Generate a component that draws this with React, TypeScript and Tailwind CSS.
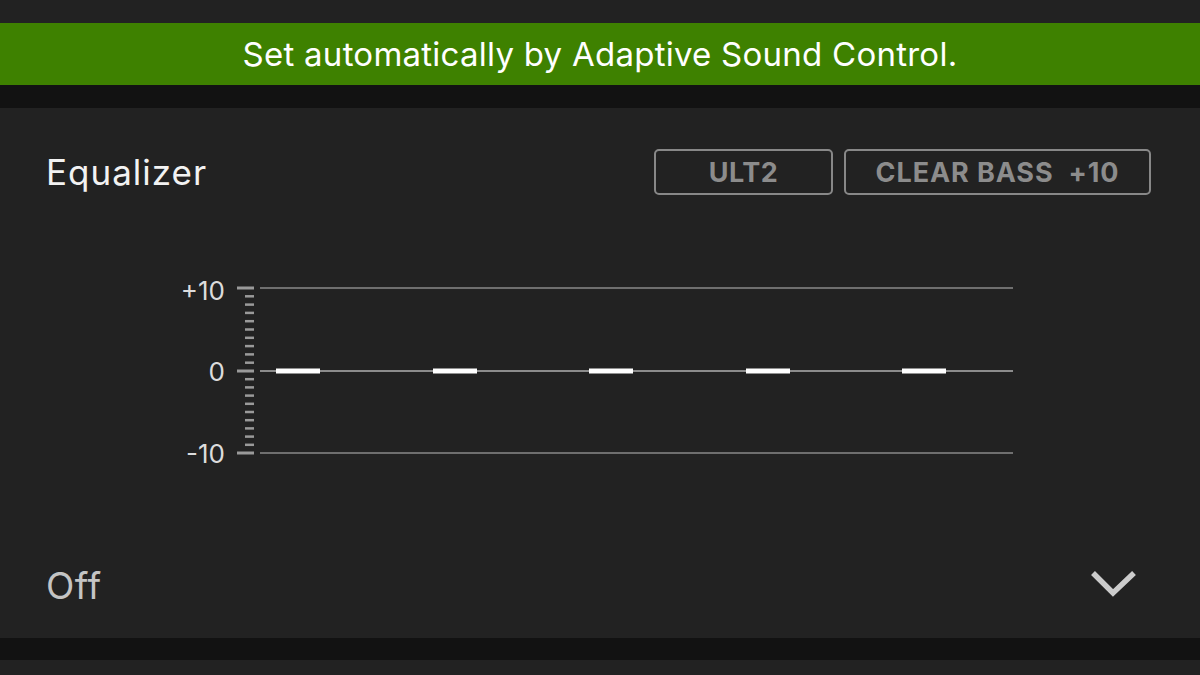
import React from "react";

const font = { fontFamily: "Inter, 'Noto Sans', sans-serif" };

function Chart() {
  const top = 28; // y of +10 line within svg (svg top at 260)
  const zero = 111;
  const bottom = 193;
  const minor: number[] = [];
  for (let i = 1; i < 10; i++) minor.push(top + ((zero - top) * i) / 10);
  for (let i = 1; i < 10; i++) minor.push(zero + ((bottom - zero) * i) / 10);
  const bars = [276, 433, 589, 746, 902];
  const ox = 160;
  return (
    <svg width="860" height="220" viewBox="0 0 860 220" className="block">
      <g style={font} fontSize="26" fill="#dcdcdc" textAnchor="end">
        <text x={225 - ox} y={top + 12}>+10</text>
        <text x={225 - ox} y={zero + 10}>0</text>
        <text x={225 - ox} y={bottom + 10}>-10</text>
      </g>
      {[top, zero, bottom].map((y) => (
        <rect key={y} x={237 - ox} y={y - 1.5} width={17} height={3} fill="#9a9a9a" />
      ))}
      {minor.map((y, i) => (
        <rect key={i} x={245 - ox} y={y - 1.25} width={9} height={2.5} fill="#9a9a9a" />
      ))}
      <rect x={260 - ox} y={top - 1} width={753} height={2} fill="#6f6f6f" />
      <rect x={260 - ox} y={zero - 1} width={753} height={2} fill="#8c8c8c" />
      <rect x={260 - ox} y={bottom - 1} width={753} height={2} fill="#6f6f6f" />
      {bars.map((x) => (
        <rect key={x} x={x - ox} y={zero - 2.5} width={44} height={5} fill="#ffffff" />
      ))}
    </svg>
  );
}

export default function App() {
  return (
    <div className="w-[1200px] h-[675px] flex flex-col bg-[#222222] overflow-hidden" style={font}>
      <div className="h-[23px] bg-[#222222]" />
      <div className="h-[62px] bg-[#3e8100] flex items-center justify-center">
        <span className="text-white text-[33px] tracking-[0.25px] leading-none">Set automatically by Adaptive Sound Control.</span>
      </div>
      <div className="h-[23px] bg-[#121212]" />
      <div className="h-[530px] bg-[#222222] flex flex-col pt-[41px]">
        <div className="h-[46px] flex items-center justify-between pl-[46px] pr-[49px]">
          <span className="text-[35px] tracking-[1px] text-[#f2f2f2] leading-none">Equalizer</span>
          <div className="flex gap-[11px] h-[46px]">
            <div className="w-[179px] h-[46px] border-2 border-[#888888] rounded-[5px] flex items-center justify-center text-[#8c8c8c] font-bold text-[27px] tracking-[0.5px] leading-none">
              ULT2
            </div>
            <div className="w-[307px] h-[46px] border-2 border-[#888888] rounded-[5px] flex items-center justify-center text-[#8c8c8c] font-bold text-[27px] tracking-[0.9px] leading-none">
              <span>CLEAR BASS</span>
              <span className="ml-[15px]">+10</span>
            </div>
          </div>
        </div>
        <div className="mt-[65px] ml-[160px]">
          <Chart />
        </div>
        <div className="mt-[75px] h-[60px] flex items-center justify-between pl-[46px] pr-[62px]">
          <span className="text-[37px] tracking-[0.5px] text-[#c4c4c4] leading-none">Off</span>
          <svg width="48" height="32" viewBox="0 0 48 32">
            <polyline points="3,4 23,24 44,4" fill="none" stroke="#cccccc" strokeWidth="5.5" />
          </svg>
        </div>
      </div>
      <div className="h-[22px] bg-[#121212]" />
      <div className="flex-1 bg-[#222222]" />
    </div>
  );
}
